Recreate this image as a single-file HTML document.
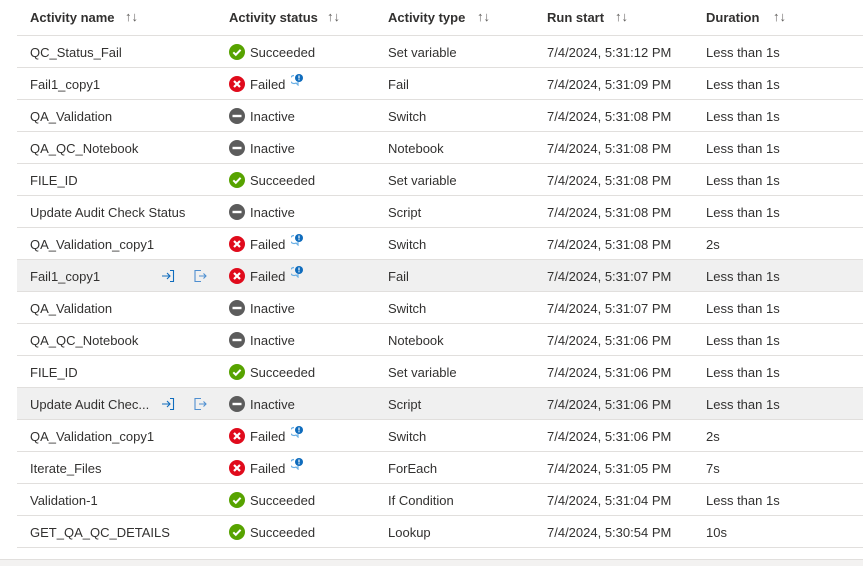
<!DOCTYPE html>
<html><head><meta charset="utf-8"><style>
body{margin:0;width:863px;height:565px;background:#fff;font-family:"Liberation Sans",sans-serif;font-size:13px;color:#323130;position:relative;overflow:hidden}
.h{position:absolute;top:10px;font-weight:bold;font-size:13px;color:#323130}
.s{position:absolute;top:9px;font-size:13px;color:#605e5c}
.row{position:absolute;left:17px;right:0;height:31px;border-bottom:1px solid #e1dfdd}
.row.hl{background:#f0f0f0}
.c{position:absolute;top:9px;white-space:nowrap}
.ic{position:absolute;top:8px;left:212px;width:16px;height:16px}
.bub{position:absolute;top:5px;left:274px;width:13px;height:13px}
.foot{position:absolute;left:0;right:0;top:559px;height:6px;background:#f3f2f1;border-top:1px solid #e1dfdd}
</style></head><body>
<div class="h" style="left:30px">Activity name</div><div class="s" style="left:125px">↑↓</div>
<div class="h" style="left:229px">Activity status</div><div class="s" style="left:327px">↑↓</div>
<div class="h" style="left:388px">Activity type</div><div class="s" style="left:477px">↑↓</div>
<div class="h" style="left:547px">Run start</div><div class="s" style="left:615px">↑↓</div>
<div class="h" style="left:706px">Duration</div><div class="s" style="left:773px">↑↓</div>
<div style="position:absolute;left:17px;right:0;top:35px;height:1px;background:#e1dfdd"></div>
<div id="t"></div>
<div class="foot"></div>
<script>
var d=[["QC_Status_Fail","S","Set variable","7/4/2024, 5:31:12 PM","Less than 1s"],
["Fail1_copy1","F","Fail","7/4/2024, 5:31:09 PM","Less than 1s"],
["QA_Validation","I","Switch","7/4/2024, 5:31:08 PM","Less than 1s"],
["QA_QC_Notebook","I","Notebook","7/4/2024, 5:31:08 PM","Less than 1s"],
["FILE_ID","S","Set variable","7/4/2024, 5:31:08 PM","Less than 1s"],
["Update Audit Check Status","I","Script","7/4/2024, 5:31:08 PM","Less than 1s"],
["QA_Validation_copy1","F","Switch","7/4/2024, 5:31:08 PM","2s"],
["Fail1_copy1","F","Fail","7/4/2024, 5:31:07 PM","Less than 1s",1],
["QA_Validation","I","Switch","7/4/2024, 5:31:07 PM","Less than 1s"],
["QA_QC_Notebook","I","Notebook","7/4/2024, 5:31:06 PM","Less than 1s"],
["FILE_ID","S","Set variable","7/4/2024, 5:31:06 PM","Less than 1s"],
["Update Audit Chec...","I","Script","7/4/2024, 5:31:06 PM","Less than 1s",1],
["QA_Validation_copy1","F","Switch","7/4/2024, 5:31:06 PM","2s"],
["Iterate_Files","F","ForEach","7/4/2024, 5:31:05 PM","7s"],
["Validation-1","S","If Condition","7/4/2024, 5:31:04 PM","Less than 1s"],
["GET_QA_QC_DETAILS","S","Lookup","7/4/2024, 5:30:54 PM","10s"]];
var ic={S:'<svg class="ic" viewBox="0 0 16 16"><circle cx="8" cy="8" r="8" fill="#57a300"/><path d="M4.3 8.3l2.5 2.5 4.8-5" stroke="#fff" stroke-width="2" fill="none"/></svg>',
F:'<svg class="ic" viewBox="0 0 16 16"><circle cx="8" cy="8" r="8" fill="#e00b1c"/><path d="M5 5l6 6M11 5l-6 6" stroke="#fff" stroke-width="2.2"/></svg>',
I:'<svg class="ic" viewBox="0 0 16 16"><circle cx="8" cy="8" r="8" fill="#5c5c5c"/><rect x="3.5" y="6.8" width="9" height="2.4" fill="#fff"/></svg>'};
var nm={S:"Succeeded",F:"Failed",I:"Inactive"};
var bub='<svg class="bub" viewBox="0 0 13 13"><path d="M3 2.5a4 4 0 1 0 2 7.5l2 2v-3" fill="none" stroke="#69afe5" stroke-width="1.2"/><circle cx="8" cy="5" r="4" fill="#0f6cbd"/><rect x="7.4" y="2.5" width="1.2" height="3" fill="#fff"/><rect x="7.4" y="6.2" width="1.2" height="1.1" fill="#fff"/></svg>';
var io='<svg style="position:absolute;left:144px;top:9px" width="14" height="14" viewBox="0 0 14 14"><path d="M1 7h8M6 4l3 3-3 3M9 1.5h3.5v11H9" fill="none" stroke="#0f6cbd" stroke-width="1.1"/></svg><svg style="position:absolute;left:176px;top:9px" width="14" height="14" viewBox="0 0 14 14"><path d="M8 1.5H2v11h6M6 7h7M10.5 4.5L13 7l-2.5 2.5" fill="none" stroke="#4f8fd0" stroke-width="1.1"/></svg>';
var h="";
d.forEach(function(r,i){
h+='<div class="row'+(r[5]?' hl':'')+'" style="top:'+(36+32*i)+'px">'+
'<div class="c" style="left:13px">'+r[0]+'</div>'+(r[5]?io:'')+ic[r[1]]+
'<div class="c" style="left:233px">'+nm[r[1]]+'</div>'+(r[1]=="F"?bub:'')+
'<div class="c" style="left:371px">'+r[2]+'</div>'+
'<div class="c" style="left:530px">'+r[3]+'</div>'+
'<div class="c" style="left:689px">'+r[4]+'</div></div>';});
document.getElementById("t").innerHTML=h;
</script>
</body></html>
